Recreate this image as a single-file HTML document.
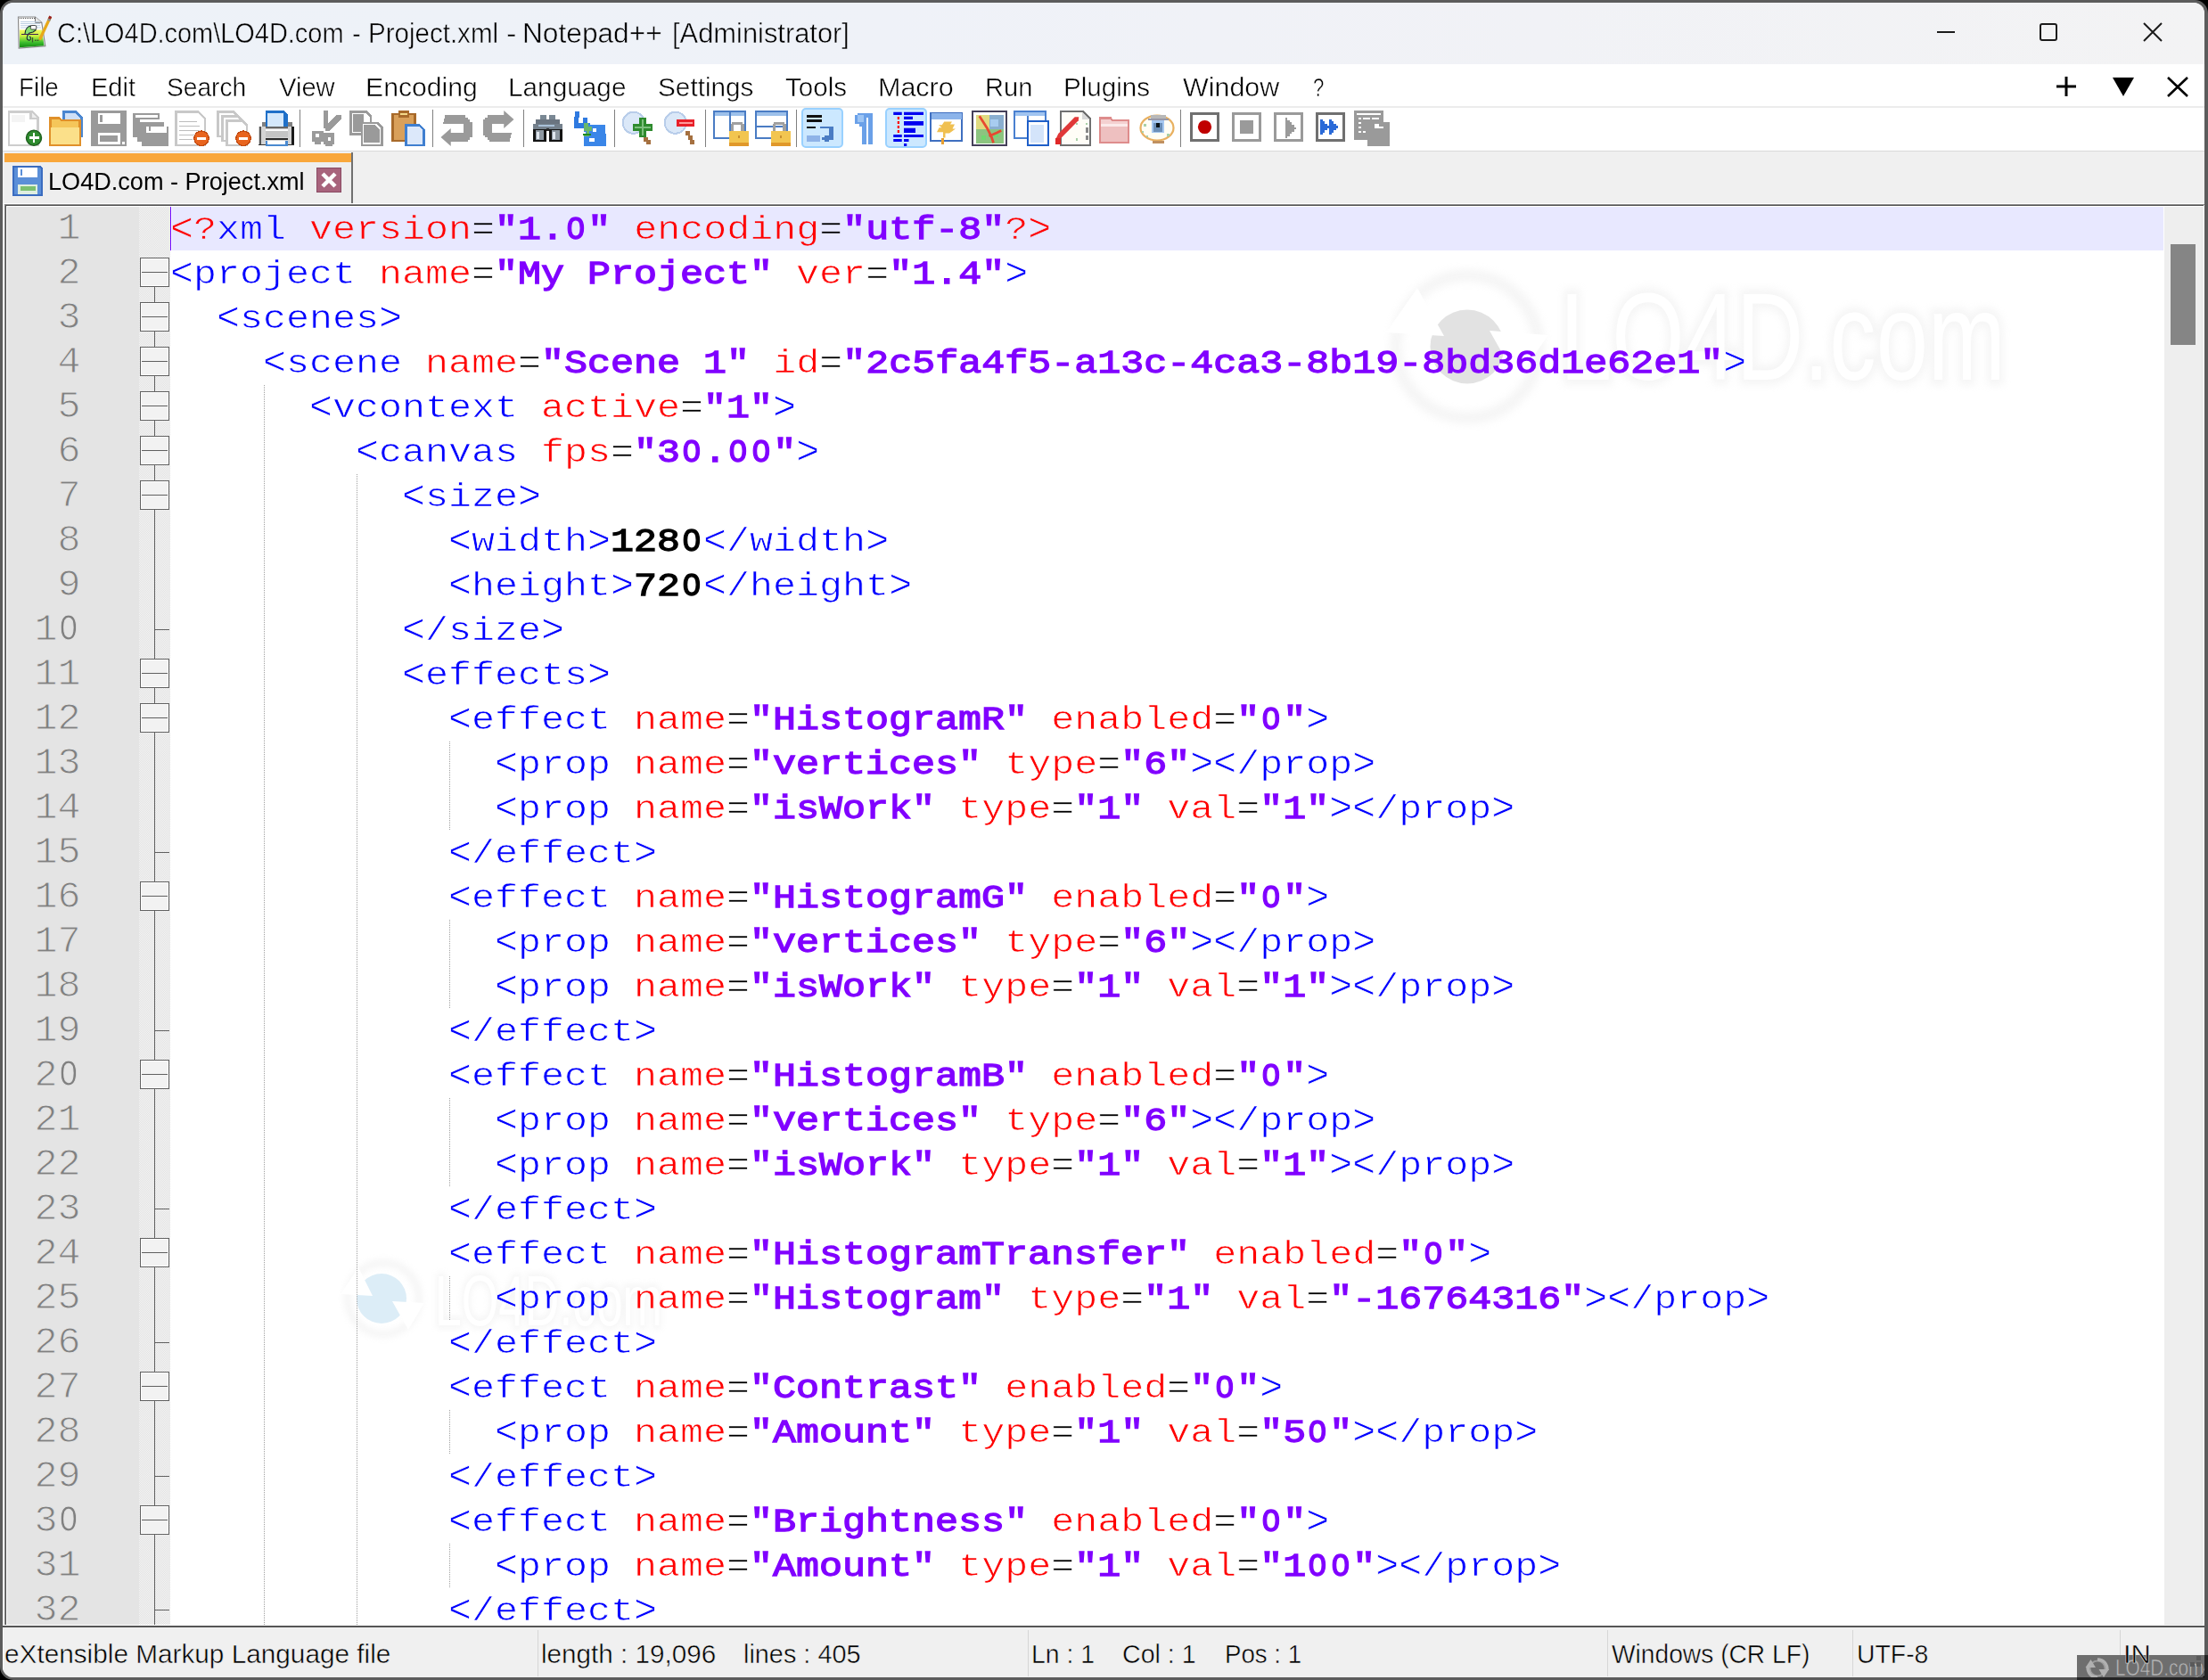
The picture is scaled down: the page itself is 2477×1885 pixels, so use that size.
<!DOCTYPE html><html><head><meta charset="utf-8"><style>
*{margin:0;padding:0;box-sizing:border-box}
html,body{width:2477px;height:1885px;overflow:hidden;background:#000}
.fr{position:absolute;left:0;top:0;width:2477px;height:1885px;background:#5c5c5c;border-radius:15px}
.win{position:absolute;left:0;top:0;width:2477px;height:1885px;clip-path:inset(3px 4px 3px 3px round 12px);background:#f0f0f0}
.t{position:absolute;white-space:pre;transform-origin:0 0}
.r{position:absolute}
.code{position:absolute;left:191px;font-family:'Liberation Mono',monospace;font-size:43.33px;line-height:50px;white-space:pre;height:50px;-webkit-text-stroke:0.8px #fff}
.code span.t_{color:#0000ff}
.ln{position:absolute;left:7.5px;width:83px;text-align:right;font-family:'Liberation Mono',monospace;font-size:43.33px;line-height:50px;color:#808080;white-space:pre;-webkit-text-stroke:1px #e4e4e4}
.a{color:#ff0000}.v{color:#8000ff;-webkit-text-stroke:1.5px #8000ff}.e{color:#000}.d{color:#ff0000}.x{color:#000;-webkit-text-stroke:1.5px #000}.tg{color:#0000ff}
.z{display:inline-block;transform:scaleX(0.8)}
.br{display:inline-block;transform:scaleY(1.2);transform-origin:50% 21.75px}
.g{position:absolute;width:1px;height:50px;background:repeating-linear-gradient(#a0a0a0 0 1px,transparent 1px 2px)}
.sep{position:absolute;top:123px;width:1px;height:42px;background:#808080}
.ssep{position:absolute;top:1829px;width:1px;height:52px;background:#d6d6d6}
</style></head><body>
<div class="fr"></div><div class="win">
<div class="r" style="left:0;top:0;width:2477px;height:72px;background:linear-gradient(90deg,#edf2f8 0%,#eff2f8 40%,#f1f2f6 70%,#f3f3f4 100%)"></div>
<div class="t" style="left:63.95px;top:14.52px;font-size:30.43px;line-height:45.65px;transform:scaleX(0.9508);color:#000;font-family:'Liberation Sans',sans-serif;-webkit-text-stroke:0.5px #eff2f8">C:\LO4D.com\LO4D.com</div>
<div class="t" style="left:394.53px;top:14.52px;font-size:30.43px;line-height:45.65px;transform:scaleX(0.9594);color:#000;font-family:'Liberation Sans',sans-serif;-webkit-text-stroke:0.5px #eff2f8">-</div>
<div class="t" style="left:412.84px;top:14.52px;font-size:30.43px;line-height:45.65px;transform:scaleX(0.9707);color:#000;font-family:'Liberation Sans',sans-serif;-webkit-text-stroke:0.5px #eff2f8">Project.xml</div>
<div class="t" style="left:567.62px;top:14.52px;font-size:30.43px;line-height:45.65px;transform:scaleX(1.1303);color:#000;font-family:'Liberation Sans',sans-serif;-webkit-text-stroke:0.5px #eff2f8">-</div>
<div class="t" style="left:586.47px;top:14.52px;font-size:30.43px;line-height:45.65px;transform:scaleX(1.0409);color:#000;font-family:'Liberation Sans',sans-serif;-webkit-text-stroke:0.5px #eff2f8">Notepad++</div>
<div class="t" style="left:753.74px;top:14.52px;font-size:30.43px;line-height:45.65px;transform:scaleX(1.0144);color:#000;font-family:'Liberation Sans',sans-serif;-webkit-text-stroke:0.5px #eff2f8">[Administrator]</div>
<svg class="r" style="left:16px;top:14px" width="46" height="44" viewBox="16 14 46 44">
<defs><linearGradient id="ng" x1="0" y1="0" x2="0" y2="1"><stop offset="0" stop-color="#f4f860"/><stop offset="0.35" stop-color="#c8f040"/><stop offset="0.7" stop-color="#40c030"/><stop offset="1" stop-color="#108a10"/></linearGradient></defs>
<path d="M20.5 19H39.5L46.8 25.3L50.8 51.7L21.2 54z" fill="#fff" stroke="#8a8a8a" stroke-width="1.2"/>
<path d="M39.5 19V25.3H46.8" fill="#e8e8e8" stroke="#777" stroke-width="1"/>
<path d="M22 20.5H39" stroke="#555" stroke-width="1" stroke-dasharray="1 1"/>
<path d="M23 24.5H44M23 26.5H45M23 28.7H45M23 31H46" stroke="#b8cce0" stroke-width="0.9"/>
<path d="M22 33.5L47 33.5L49.5 51.3L22 53.2z" fill="url(#ng)"/>
<path d="M28 38C28 32 32 29 35 29L40 30L40 34L37 36L33 37C30 40 29 44 32 45C35 46 35 41 33 41" fill="#88e070" stroke="#1a2a30" stroke-width="1.1"/>
<rect x="34.3" y="28.5" width="6.5" height="4.5" rx="1.5" fill="#fff" stroke="#222" stroke-width="0.8"/>
<path d="M24 38.5H43" stroke="#402050" stroke-width="1.1"/>
<path d="M36.5 42V47.5" stroke="#3a5a30" stroke-width="1.3"/><path d="M39 45.2H44" stroke="#222" stroke-width="1" stroke-dasharray="1 0.6"/>
<path d="M56.5 19L44.5 44.5" stroke="#e8a818" stroke-width="3.2"/><path d="M56.8 18.3L55.2 21.6" stroke="#9a2020" stroke-width="3.2"/><path d="M55.6 21.2L54.6 23.4" stroke="#909090" stroke-width="3.2"/>
</svg>
<div class="r" style="left:2173px;top:35px;width:20px;height:2px;background:#1b1b1b"></div>
<div class="r" style="left:2288px;top:26px;width:20px;height:20px;border:2px solid #1b1b1b;border-radius:3px"></div>
<svg class="r" style="left:2404px;top:25px" width="22" height="22" viewBox="0 0 22 22"><path d="M1 1L21 21M21 1L1 21" stroke="#1b1b1b" stroke-width="2"/></svg>
<div class="r" style="left:0;top:72px;width:2477px;height:47px;background:#fff"></div>
<div class="r" style="left:0;top:119px;width:2477px;height:2px;background:#ececec"></div>
<div class="t" style="left:21.28px;top:74.8px;font-size:30.0px;line-height:45.0px;transform:scaleX(0.9262);color:#000;font-family:'Liberation Sans',sans-serif;-webkit-text-stroke:0.5px #fff">File</div>
<div class="t" style="left:101.98px;top:74.8px;font-size:30.0px;line-height:45.0px;transform:scaleX(0.9675);color:#000;font-family:'Liberation Sans',sans-serif;-webkit-text-stroke:0.5px #fff">Edit</div>
<div class="t" style="left:187.29px;top:74.8px;font-size:30.0px;line-height:45.0px;transform:scaleX(0.9388);color:#000;font-family:'Liberation Sans',sans-serif;-webkit-text-stroke:0.5px #fff">Search</div>
<div class="t" style="left:312.81px;top:74.8px;font-size:30.0px;line-height:45.0px;transform:scaleX(0.972);color:#000;font-family:'Liberation Sans',sans-serif;-webkit-text-stroke:0.5px #fff">View</div>
<div class="t" style="left:410.39px;top:74.8px;font-size:30.0px;line-height:45.0px;transform:scaleX(1.0058);color:#000;font-family:'Liberation Sans',sans-serif;-webkit-text-stroke:0.5px #fff">Encoding</div>
<div class="t" style="left:570.22px;top:74.8px;font-size:30.0px;line-height:45.0px;transform:scaleX(0.9923);color:#000;font-family:'Liberation Sans',sans-serif;-webkit-text-stroke:0.5px #fff">Language</div>
<div class="t" style="left:737.71px;top:74.8px;font-size:30.0px;line-height:45.0px;transform:scaleX(0.9915);color:#000;font-family:'Liberation Sans',sans-serif;-webkit-text-stroke:0.5px #fff">Settings</div>
<div class="t" style="left:880.91px;top:74.8px;font-size:30.0px;line-height:45.0px;transform:scaleX(0.9854);color:#000;font-family:'Liberation Sans',sans-serif;-webkit-text-stroke:0.5px #fff">Tools</div>
<div class="t" style="left:985.26px;top:74.8px;font-size:30.0px;line-height:45.0px;transform:scaleX(1.0163);color:#000;font-family:'Liberation Sans',sans-serif;-webkit-text-stroke:0.5px #fff">Macro</div>
<div class="t" style="left:1105.28px;top:74.8px;font-size:30.0px;line-height:45.0px;transform:scaleX(0.9684);color:#000;font-family:'Liberation Sans',sans-serif;-webkit-text-stroke:0.5px #fff">Run</div>
<div class="t" style="left:1193.03px;top:74.8px;font-size:30.0px;line-height:45.0px;transform:scaleX(0.9873);color:#000;font-family:'Liberation Sans',sans-serif;-webkit-text-stroke:0.5px #fff">Plugins</div>
<div class="t" style="left:1327.1px;top:74.8px;font-size:30.0px;line-height:45.0px;transform:scaleX(1.015);color:#000;font-family:'Liberation Sans',sans-serif;-webkit-text-stroke:0.5px #fff">Window</div>
<div class="t" style="left:1472.62px;top:74.8px;font-size:30.0px;line-height:45.0px;transform:scaleX(0.7361);color:#000;font-family:'Liberation Sans',sans-serif;-webkit-text-stroke:0.5px #fff">?</div>
<svg class="r" style="left:2306px;top:85px" width="24" height="24" viewBox="0 0 24 24"><path d="M12 1V23M1 12H23" stroke="#000" stroke-width="3"/></svg>
<svg class="r" style="left:2370px;top:87px" width="24" height="21" viewBox="0 0 24 21"><path d="M0 0H24L12 21z" fill="#000"/></svg>
<svg class="r" style="left:2431px;top:86px" width="24" height="23" viewBox="0 0 24 23"><path d="M1 1L23 22M23 1L1 22" stroke="#000" stroke-width="2.6"/></svg>
<div class="r" style="left:0;top:121px;width:2477px;height:48px;background:#fff"></div>
<div class="r" style="left:0;top:169px;width:2477px;height:1px;background:#d9d9d9"></div>
<div class="r" style="left:899px;top:121px;width:47px;height:45px;background:#cce8ff;border:2px solid #99d1ff;border-radius:5px"></div>
<div class="r" style="left:993px;top:121px;width:47px;height:45px;background:#cce8ff;border:2px solid #99d1ff;border-radius:5px"></div>
<svg style="position:absolute;left:8px;top:124px" width="40" height="40" viewBox="0 0 16 16" shape-rendering="crispEdges" ><path d="M0.7 0.5h10.3l2.7 2.7v12.3h-13z" fill="#fff" stroke="#cdcdcd"/><path d="M10.5 0.5v3h3" fill="#eee" stroke="#cdcdcd"/><path d="M2 2h6v3h-6z" fill="#f4f4f4"/><circle cx="12" cy="12.3" r="3.4" fill="#2e8b2e" stroke="#1f5f1f" stroke-width="0.6" shape-rendering="auto"/><path d="M12 10.1v4.4M9.8 12.3h4.4" stroke="#fff" stroke-width="1.1"/></svg>
<svg style="position:absolute;left:55px;top:124px" width="40" height="40" viewBox="0 0 16 16" shape-rendering="crispEdges" ><path d="M6.5 0.5h5.5l2.5 2.5v8.5h-8z" fill="#cfe0f7" stroke="#4a86d0"/><path d="M0.5 3.3h4l1 1h8.3v11.2h-13.3z" fill="#f5c65a" stroke="#e0902a"/><path d="M0.9 7.5h12.5v7.6h-12.5z" fill="#fbe08a"/></svg>
<svg style="position:absolute;left:102px;top:124px" width="40" height="40" viewBox="0 0 16 16" shape-rendering="crispEdges" ><path d="M0 0h16v16h-16z" fill="#9a9a9a"/><path d="M3 1h10v5h-10z" fill="#fff"/><path d="M4 2h1v3h-1z" fill="#9a9a9a"/><path d="M3 10h10v5h-10z" fill="#fff"/><path d="M4 11h8v3h-8z" fill="#9a9a9a"/><path d="M14 14h1v1h-1z" fill="#fff"/></svg>
<svg style="position:absolute;left:149px;top:124px" width="40" height="40" viewBox="0 0 16 16" shape-rendering="crispEdges" ><path d="M0 1h12v4h2v2h2v9h-12v-2h-2v-2h-2z" fill="#9a9a9a"/><path d="M1 2h10v1h-10z M3 4h9v1h-9z" fill="#fff"/><path d="M6 7h9v3h-9z" fill="#fff"/><path d="M7 7h1v2h-1z" fill="#9a9a9a"/></svg>
<svg style="position:absolute;left:196px;top:124px" width="40" height="40" viewBox="0 0 16 16" shape-rendering="crispEdges" ><path d="M0.5 0.5h10l3 3v12h-13z" fill="#fff" stroke="#c8c8c8"/><path d="M2 5h8M2 7h9M2 9h9M2 11h7M2 13h6" stroke="#bdbdbd" stroke-width="0.7"/><circle cx="12" cy="12.5" r="3.3" fill="#e8641e" stroke="#c24a10" stroke-width="0.5"/><path d="M10 12.5h4" stroke="#fff" stroke-width="1"/></svg>
<svg style="position:absolute;left:243px;top:124px" width="40" height="40" viewBox="0 0 16 16" shape-rendering="crispEdges" ><path d="M0.5 0.5h7l2 2v9h-9z" fill="#fff" stroke="#c8c8c8"/><path d="M2.5 2.5h7l2 2v9h-9z" fill="#fff" stroke="#c8c8c8"/><path d="M4.5 4.5h7l2 2v9h-9z" fill="#fff" stroke="#c8c8c8"/><circle cx="12" cy="12.5" r="3.3" fill="#e8641e" stroke="#c24a10" stroke-width="0.5"/><path d="M10 12.5h4" stroke="#fff" stroke-width="1"/></svg>
<svg style="position:absolute;left:290px;top:124px" width="40" height="40" viewBox="0 0 16 16" shape-rendering="crispEdges" ><path d="M0 7h16v8h-16z" fill="#d4d4d4"/><path d="M0.2 7h1v8h-1z" fill="#555"/><path d="M14.8 7h1v8h-1z" fill="#1a1a1a"/>
<path d="M1.5 5h2v2h-2z M12.5 5h2.5v2h-2.5z" fill="#808080"/><path d="M3 8h10v4h-10z" fill="#c4c4c4"/><path d="M3 8.2h10v1h-10z" fill="#fafafa"/>
<path d="M3 7h10v1h-10z" fill="#666"/><path d="M3 12.2h10v0.9h-10z" fill="#2a2a2a"/><path d="M0 15h16v0.6h-16z" fill="#333"/>
<path d="M3 0h8.5l1.8 1.8v5.2h-10.3z" fill="#2070c8"/><path d="M4 1h7v6h-7z" fill="#d4e8fb"/>
<path d="M3 13.5h10v2.5h-10z" fill="#4a8ad0"/><path d="M4 13.7h8v1.4h-8z" fill="#fff"/></svg>
<svg style="position:absolute;left:345px;top:124px" width="40" height="40" viewBox="0 0 16 16" shape-rendering="crispEdges" ><path d="M7 0h2v8h-2z" fill="#9a9a9a"/><path d="M13 2h2v2l-5 5h-2v-2z" fill="#9a9a9a"/><path d="M2 9h5v5h-1v1h-3v-1h-1z M7 10h5v5h-1v1h-3v-1h-1z" fill="#9a9a9a"/><path d="M3.5 10.5h1.5v1.5h-1.5z M9 12h1.5v1.5h-1.5z" fill="#fff"/></svg>
<svg style="position:absolute;left:392px;top:124px" width="40" height="40" viewBox="0 0 16 16" shape-rendering="crispEdges" ><path d="M0.5 0.5h7l2 2v8h-9z" fill="#fff" stroke="#9a9a9a"/><path d="M1.5 1.5h5v8h-5z" fill="#9a9a9a"/><path d="M5.5 5.5h7l2 2v8h-9z" fill="#fff" stroke="#9a9a9a"/><path d="M6.5 6.5h5l2 2v6h-7z" fill="#9a9a9a"/></svg>
<svg style="position:absolute;left:439px;top:124px" width="40" height="40" viewBox="0 0 16 16" shape-rendering="crispEdges" ><path d="M0.5 1.5h10v12h-10z" fill="#d9a05a" stroke="#a86a2a"/><path d="M3.5 0.5h4v2h-4z" fill="#f3d98a" stroke="#a86a2a"/><path d="M6.5 6.5h6l2 2v7h-8z" fill="#dce8fa" stroke="#3f7fd0"/></svg>
<svg style="position:absolute;left:492px;top:124px" width="40" height="40" viewBox="0 0 16 16" shape-rendering="crispEdges" ><path d="M3 2h9v1h1v1h1v1h1v7h-1v1h-1v1h-8v-4h6v-4h-9z" fill="#9a9a9a"/><path d="M5.5 8v8l-4.5-4z" fill="#9a9a9a" shape-rendering="auto"/></svg>
<svg style="position:absolute;left:539px;top:124px" width="40" height="40" viewBox="0 0 16 16" shape-rendering="crispEdges" ><g transform="rotate(180 8 8)"><path d="M3 2h9v1h1v1h1v1h1v7h-1v1h-1v1h-8v-4h6v-4h-9z" fill="#9a9a9a"/><path d="M5.5 8v8l-4.5-4z" fill="#9a9a9a" shape-rendering="auto"/></g></svg>
<svg style="position:absolute;left:594px;top:124px" width="40" height="40" viewBox="0 0 16 16" shape-rendering="crispEdges" ><path d="M4.8 1.9h2.8v2.5h-2.8z M8.8 1.9h2.7v2.5h-2.7z" fill="#7a8894"/><path d="M2.8 4h10.7v2h-10.7z" fill="#6a7480"/>
<path d="M1.6 6h13.2v2.2h-13.2z" fill="#74808c"/><path d="M4 6.3h7v0.8h-7z" fill="#a8c0d8"/>
<path d="M1.6 8.2h6v5.8h-6z M8.8 8.2h6v5.8h-6z" fill="#141414"/><path d="M2.7 8.9h3.8v4.1h-3.8z M9.9 8.9h3.8v4.1h-3.8z" fill="#8e98a2"/>
<path d="M3.2 9.4h1.1v3.3h-1.1z M10.4 9.4h1.1v3.3h-1.1z" fill="#e0e6ee"/><path d="M7.6 8h1.2v1h-1.2z" fill="#2a2a2a"/></svg>
<svg style="position:absolute;left:641px;top:124px" width="40" height="40" viewBox="0 0 16 16" shape-rendering="crispEdges" ><path d="M1.6 0.5h2v2.5h3.4v2.5h1.2v2.5h-7.2v-5.1h0.6z" fill="#2f7ae0"/><path d="M3 3.3h2.2v2.4h-2.2z" fill="#fff"/>
<path d="M5.6 6.5h9.5v4h0.4v5.5h-10v-5h1v-1.5h-0.9z" fill="#3a86e8"/><path d="M9.5 7.8h1.5v1.7h-1.5z M8 12.3h2.5v1.5h-2.5z" fill="#fff"/>
<path d="M5.5 5.5h2v1.8h1.5v2h-1.2v2.2h-2.4v-1h1.2v-1.5h-1.1z" fill="#6ab86a"/><path d="M5.3 10.3h3.5v0.8h-3.5z" fill="#1f8a1f"/></svg>
<svg style="position:absolute;left:697px;top:124px" width="40" height="40" viewBox="0 0 16 16" shape-rendering="crispEdges" ><circle cx="5.5" cy="5.5" r="4.8" fill="#dbe8f8" stroke="#b8cdea" stroke-width="0.8"/><path d="M8 3h3v3h3v3h-3v3h-3v-3h-3v-3h3z" fill="#2e8b2e"/><path d="M9 4h1v7h-1z M6 7h7v1h-7z" fill="#7fc07f"/><path d="M10 12h2v1h1v2h-2v-1h-1z" fill="#a57040"/></svg>
<svg style="position:absolute;left:744px;top:124px" width="40" height="40" viewBox="0 0 16 16" shape-rendering="crispEdges" ><circle cx="5.5" cy="5.5" r="4.8" fill="#dbe8f8" stroke="#b8cdea" stroke-width="0.8"/><path d="M6 4h8v3h-8z" fill="#e8202a"/><path d="M7 5h6v1h-6z" fill="#ff9a9a"/><path d="M10 9h2v2h1v2h1v2h-2v-2h-1v-2h-1z" fill="#a57040"/></svg>
<svg style="position:absolute;left:800px;top:124px" width="40" height="40" viewBox="0 0 16 16" shape-rendering="crispEdges" ><path d="M0 0h14.7v12.7h-14.7z" fill="#4a7cc4"/><path d="M0.7 0.7h13.3v1.6h-13.3z" fill="#9cc0ea"/><path d="M0.7 2.3h13.3v9.7h-13.3z" fill="#fff"/><path d="M7 0.7h0.8v11.3h-0.8z" fill="#4a7cc4"/>
<path d="M8.5 5h4.5v1h0.8v3h-1.5v-2.5h-3v2.5h-1.5v-3h0.7z" fill="#a0a0a0"/><path d="M7 9h9v7h-9z" fill="#f2c550"/><path d="M7 14.5h9v1.5h-9z" fill="#e0982a"/><path d="M11 11h1v1.5h-1z" fill="#c89030"/></svg>
<svg style="position:absolute;left:847px;top:124px" width="40" height="40" viewBox="0 0 16 16" shape-rendering="crispEdges" ><path d="M0 0h14.7v12.7h-14.7z" fill="#4a7cc4"/><path d="M0.7 0.7h13.3v1.6h-13.3z" fill="#9cc0ea"/><path d="M0.7 2.3h13.3v9.7h-13.3z" fill="#fff"/><path d="M0.7 6.6h13.3v0.8h-13.3z" fill="#4a7cc4"/>
<path d="M8.5 5h4.5v1h0.8v3h-1.5v-2.5h-3v2.5h-1.5v-3h0.7z" fill="#a0a0a0"/><path d="M7 9h9v7h-9z" fill="#f2c550"/><path d="M7 14.5h9v1.5h-9z" fill="#e0982a"/><path d="M11 11h1v1.5h-1z" fill="#c89030"/></svg>
<svg style="position:absolute;left:902px;top:124px" width="40" height="40" viewBox="0 0 16 16" shape-rendering="crispEdges" ><path d="M1 2h7v1h-7z M1 4h7v1h-7z M1 7h4v1h-4z" fill="#111"/><path d="M7 7h6v6h-2v-5h-4z" fill="#4a7cc4"/><path d="M1 11h6v3h-6z" fill="#8fb3e8"/><path d="M9 11h2v3h-2z M8 12h1v1h-1z" fill="#4a7cc4"/></svg>
<svg style="position:absolute;left:949px;top:124px" width="40" height="40" viewBox="0 0 16 16" shape-rendering="crispEdges" ><path d="M4 1h8v14h-2v-12h-1v12h-2v-8h-1v-1h-2v-4h1v-1z" fill="#6aa0e8"/><path d="M5 2h3v3h-3z" fill="#9cc4f4"/></svg>
<svg style="position:absolute;left:996px;top:124px" width="40" height="40" viewBox="0 0 16 16" shape-rendering="crispEdges" ><path d="M2.5 0.7h3.8v1.3h-3.8z M7.2 0.7h8.8v1.3h-8.8z M7.2 2.7h4v1.3h-4z M7.2 4.8h8.8v1.9h-8.8z M7.2 7.9h5.2v2.1h-5.2z M2.5 10.8h3.8v1.2h-3.8z M7.2 10.8h8.8v1.2h-8.8z M2.5 12.8h3.8v1.2h-3.8z M7.2 12.8h2.2v1.2h-2.2z M7.2 14.8h1.3v1.2h-1.3z" fill="#0000f0" shape-rendering="auto"/><path d="M4.3 2.8h0.9v1.2h-0.9z M4.3 4.8h0.9v1.2h-0.9z M4.3 6.8h0.9v1.2h-0.9z M4.3 8.8h0.9v1.2h-0.9z" fill="#f00" shape-rendering="auto"/></svg>
<svg style="position:absolute;left:1043px;top:124px" width="40" height="40" viewBox="0 0 16 16" shape-rendering="crispEdges" ><path d="M0 0.8h14.8v13.1h-14.8z" fill="#3f6fc0"/><path d="M0.6 1.3h13.6v2.5h-13.6z" fill="#8cb4ea"/><path d="M0.8 3.8h13.2v9.3h-13.2z" fill="#fff"/>
<path d="M6.5 5h3.5l-0.8 1.2h2l-1 2h1.4l-2.8 2h-1.8v2h-1v-2.5h-2.8l1-2h1.2l-1.4-1.2h1.5z" fill="#f0c050" shape-rendering="auto"/><path d="M5 12.5h1.5v2.5h-1.5z" fill="#e8a030"/></svg>
<svg style="position:absolute;left:1090px;top:124px" width="40" height="40" viewBox="0 0 16 16" shape-rendering="crispEdges" ><path d="M0 0h16v16h-16z" fill="#45405a"/><path d="M0.8 0.8h14.4v14.4h-14.4z" fill="#fff"/>
<path d="M2 2h12.3v12.7h-12.3z" fill="#e0da80"/><path d="M8 2h6.3v6.5h-6.3z" fill="#8aaed0"/><path d="M8.5 4h3.5v3h-3.5z" fill="#a8ccf0"/>
<path d="M2 8.5h12.3v6.2h-12.3z" fill="#8cc480"/><path d="M4.5 11h2v2h-2z M10 10h2v2h-2z" fill="#70d870"/>
<path d="M3.5 2.5l3.5 5.5l1.8 3.5l1 3 M7.8 11.5l3.5 -1.5l2 -1" stroke="#e84830" stroke-width="1.1" fill="none" shape-rendering="auto"/></svg>
<svg style="position:absolute;left:1137px;top:124px" width="40" height="40" viewBox="0 0 16 16" shape-rendering="crispEdges" ><path d="M0 0h14.7v12.7h-14.7z" fill="#4a80d0"/><path d="M0.6 0.6h13.5v1.8h-13.5z" fill="#a0c4f0"/><path d="M0.6 2.4h13.5v9.7h-13.5z" fill="#fff"/>
<path d="M6 2.4h0.8v9.7h-0.8z" fill="#4a80d0"/><path d="M6.1 4.2h9.8v11.7h-9.8z" fill="#1f5fc8"/><path d="M6.9 5h8.2v10.1h-8.2z" fill="#fff"/><path d="M7.5 6.5h6v8h-6z" fill="#d4e4fa"/></svg>
<svg style="position:absolute;left:1184px;top:124px" width="40" height="40" viewBox="0 0 16 16" shape-rendering="crispEdges" ><path d="M2.1 0h10.3l3.5 3.5v12.4h-13.8z" fill="#707070"/><path d="M2.8 0.7h9.3l3.1 3.1v11.4h-12.4z" fill="#fffdf7"/><path d="M12 0.7v3.1h3.1" fill="#d8d8d8"/>
<path d="M9 5.5h1v1h-1z M13.5 5.5h1v1h-1z M9 12.5h1v1h-1z" fill="#a8d0a8"/><path d="M13.6 7.5h1v2.5h-1z M13.6 11h1v2h-1z" fill="#888"/>
<path d="M0 13.2l1.3 -2.8l7.4 -7.5h1.8l-0.2 1.6l-7.2 7.3l-2.4 2.1z" fill="#e03838" shape-rendering="auto"/><path d="M0 12.5h2.5v2.5h-2.5z" fill="#e02828"/></svg>
<svg style="position:absolute;left:1231px;top:124px" width="40" height="40" viewBox="0 0 16 16" shape-rendering="crispEdges" ><path d="M0.6 2.8h5.5l0.8 1h7.5v11h-13.8z" fill="#d87878" opacity="0.85"/><path d="M1.6 3.8h4.2l0.8 1h7v1.5h-12z" fill="#f4d0d0"/><path d="M1.6 6.3h12v7.5h-12z" fill="#eec0c0"/><path d="M1.6 6h12v1.2h-12z" fill="#fbeaea"/></svg>
<svg style="position:absolute;left:1278px;top:124px" width="40" height="40" viewBox="0 0 16 16" shape-rendering="crispEdges" ><ellipse cx="8" cy="7.8" rx="7.4" ry="5.6" fill="#fffdf4" stroke="#e8b060" stroke-width="0.9" shape-rendering="auto"/>
<path d="M2 6h1v1h-1z M1 9h1v1h-1z M3 11h1v1h-1z M12.5 10.5h1v1h-1z" fill="#a8d0a8"/><path d="M5 2h7v2h-7z" fill="#b8b8b8"/><path d="M4 3.5h9v0.8h-9z" fill="#9898a8"/>
<path d="M5.5 4.5h5.5v5.5h-5.5z" fill="#a6c8f0"/><path d="M6.5 5.5h4v4h-4z" fill="#6c90b8"/><path d="M7.5 5.5h1.5v2h-1.5z" fill="#0a1418"/><path d="M6 13.5h5v1.3h-5z" fill="#c09060"/></svg>
<svg style="position:absolute;left:1335px;top:126px" width="33" height="33" viewBox="0 0 13 13" shape-rendering="crispEdges" ><path d="M0.5 0.5h12v12h-12z" fill="#fff" stroke="#707070"/><circle cx="6.5" cy="6.5" r="3" fill="#c00000" shape-rendering="auto"/></svg>
<svg style="position:absolute;left:1382px;top:126px" width="33" height="33" viewBox="0 0 13 13" shape-rendering="crispEdges" ><path d="M0.5 0.5h12v12h-12z" fill="#fff" stroke="#9a9a9a"/><path d="M3.5 3.5h6v6h-6z" fill="#9a9a9a"/></svg>
<svg style="position:absolute;left:1429px;top:126px" width="33" height="33" viewBox="0 0 13 13" shape-rendering="crispEdges" ><path d="M0.5 0.5h12v12h-12z" fill="#fff" stroke="#9a9a9a"/><path d="M5 2.5h1v1h1v1h1v1h1v1h1v1h-1v1h-1v1h-1v1h-1v1h-1z" fill="#9a9a9a"/></svg>
<svg style="position:absolute;left:1476px;top:126px" width="33" height="33" viewBox="0 0 13 13" shape-rendering="crispEdges" ><path d="M0.5 0.5h12v12h-12z" fill="#fff" stroke="#707070"/><path d="M2 3h1v1h1v1h1v1h1v1h-1v1h-1v1h-1v1h-1z M6 3h1v1h1v1h1v1h1v1h-1v1h-1v1h-1v1h-1z" fill="#2a6ad8"/></svg>
<svg style="position:absolute;left:1519px;top:124px" width="40" height="40" viewBox="0 0 16 16" shape-rendering="crispEdges" ><path d="M0 0h13v5h3v11h-10v-3h-6z" fill="#9a9a9a"/><path d="M1 1h11v1h-11z M2 3h1v1h-1z M4 3h3v1h-3z M8 3h3v1h-3z M2 5h1v1h-1z M2 7h1v1h-1z M2 9h1v1h-1z M4 9h1v1h-1z M8 6h1v2h4v-1h-2v-1h-2z" fill="#fff"/></svg>
<div class="sep" style="left:336px"></div>
<div class="sep" style="left:485px"></div>
<div class="sep" style="left:587px"></div>
<div class="sep" style="left:689px"></div>
<div class="sep" style="left:791px"></div>
<div class="sep" style="left:893px"></div>
<div class="sep" style="left:1324px"></div>
<div class="r" style="left:0;top:170px;width:2477px;height:58px;background:#f0f0f0"></div>
<div class="r" style="left:0;top:228px;width:2477px;height:1px;background:#fff"></div>
<div class="r" style="left:5px;top:172px;width:389px;height:10px;background:#f9a73b"></div>
<div class="r" style="left:5px;top:182px;width:389px;height:46px;background:#eeeeee"></div>
<div class="r" style="left:394px;top:171px;width:2px;height:57px;background:#707070"></div>
<svg class="r" style="left:14px;top:186px" width="34" height="34" viewBox="0 0 16 16" shape-rendering="crispEdges">
<path d="M0.5 0.5h14l1 1v14h-15z" fill="#5b8fd8" stroke="#3a6cc0"/><path d="M3 1h10v5h-10z" fill="#fff"/><path d="M4 2h1v3h-1z" fill="#5b8fd8"/>
<path d="M3 10h10v5h-10z" fill="#dfeee0"/><path d="M4 11h8v2h-8z" fill="#7cc070"/></svg>
<svg class="r" style="left:355px;top:188px" width="28" height="28" viewBox="0 0 28 28">
<rect x="0" y="0" width="28" height="28" fill="#a8637c"/><rect x="0.5" y="0.5" width="27" height="27" fill="none" stroke="#8a4a62"/>
<path d="M7 7L21 21M21 7L7 21" stroke="#fff" stroke-width="4.5"/></svg>
<div class="t" style="left:53.53px;top:183.27px;font-size:28.12px;line-height:42.17px;transform:scaleX(0.9641);color:#000;font-family:'Liberation Sans',sans-serif">LO4D.com - Project.xml</div>
<div class="r" style="left:5px;top:229px;width:2468px;height:1px;background:#8c8c8c"></div>
<div class="r" style="left:5px;top:229px;width:1px;height:1595px;background:#8c8c8c"></div>
<div class="r" style="left:6px;top:230px;width:2466px;height:1px;background:#505050"></div>
<div class="r" style="left:6px;top:230px;width:1px;height:1593px;background:#505050"></div>
<div class="r" style="left:7px;top:231px;width:2466px;height:1593px;background:#fff"></div>
<div class="r" style="left:8px;top:232px;width:148px;height:1591px;background:#e4e4e4"></div>
<div class="r" style="left:156px;top:232px;width:35px;height:1591px;background-color:#f4f4f4;background-image:repeating-conic-gradient(#e2e2e2 0 25%,#f4f4f4 0 50%);background-size:2px 2px"></div>
<div class="r" style="left:191px;top:232px;width:2237px;height:1591px;background:#fff"></div>
<div class="r" style="left:193px;top:232px;width:2234px;height:49px;background:#e8e8ff"></div>
<div class="r" style="left:191px;top:232px;width:1px;height:49px;background:#6a00ff"></div>
<div class="r" style="left:2428px;top:232px;width:43px;height:1591px;background:#eeeeee;border-right:1px solid #e3e3e3;border-bottom:1px solid #e3e3e3"></div>
<div class="r" style="left:2435px;top:274px;width:28px;height:113px;background:#858585"></div>
<svg class="r" style="left:1540px;top:290px;overflow:visible" width="760" height="210" viewBox="0 0 760 210">
<defs><filter id="gl" x="-20%" y="-30%" width="140%" height="160%"><feGaussianBlur stdDeviation="4"/></filter></defs>
<g filter="url(#gl)" opacity="0.2"><circle cx="106" cy="99" r="80" fill="none" stroke="#d0d0d0" stroke-width="14"/><text x="210" y="136" font-family="Liberation Sans" font-size="140" fill="none" stroke="#d0d0d0" stroke-width="12" textLength="500" lengthAdjust="spacingAndGlyphs">LO4D.com</text></g>
<circle cx="106" cy="99" r="41.5" fill="#e2e2e2"/>
<path d="M50 33L15 83L80 87z M162 136L131 81L197 86z" fill="#fff"/>
<text x="210" y="136" font-family="Liberation Sans" font-size="140" fill="#fff" textLength="500" lengthAdjust="spacingAndGlyphs">LO4D.com</text>
</svg>
<svg class="r" style="left:370px;top:1400px;overflow:visible" width="380" height="115" viewBox="0 -10 380 115">
<defs><filter id="gl2" x="-20%" y="-30%" width="140%" height="160%"><feGaussianBlur stdDeviation="3"/></filter></defs>
<g filter="url(#gl2)" opacity="0.18"><circle cx="60" cy="47" r="40" fill="none" stroke="#d0d0d0" stroke-width="9"/><text x="118" y="77" font-family="Liberation Sans" font-size="80" fill="none" stroke="#d0d0d0" stroke-width="8" textLength="255" lengthAdjust="spacingAndGlyphs">LO4D.com</text></g>
<circle cx="58" cy="47" r="28" fill="#dcedf7"/>
<path d="M32 12L12 42L48 44z M88 82L70 50L106 52z" fill="#fff"/>
<text x="118" y="77" font-family="Liberation Sans" font-size="80" fill="#fff" textLength="255" lengthAdjust="spacingAndGlyphs">LO4D.com</text>
</svg>
<div class="r" style="left:157px;top:289px;width:33px;height:33px;border:1px solid #606060;background:#f2f2f2;box-shadow:inset 0 0 0 1px #fff"></div>
<div class="r" style="left:159px;top:305px;width:29px;height:1px;background:#606060"></div>
<div class="r" style="left:173px;top:322px;width:1px;height:10px;background:#606060"></div>
<div class="r" style="left:157px;top:339px;width:33px;height:33px;border:1px solid #606060;background:#f2f2f2;box-shadow:inset 0 0 0 1px #fff"></div>
<div class="r" style="left:159px;top:355px;width:29px;height:1px;background:#606060"></div>
<div class="r" style="left:173px;top:372px;width:1px;height:10px;background:#606060"></div>
<div class="r" style="left:173px;top:332px;width:1px;height:7px;background:#606060"></div>
<div class="r" style="left:157px;top:389px;width:33px;height:33px;border:1px solid #606060;background:#f2f2f2;box-shadow:inset 0 0 0 1px #fff"></div>
<div class="r" style="left:159px;top:405px;width:29px;height:1px;background:#606060"></div>
<div class="r" style="left:173px;top:422px;width:1px;height:10px;background:#606060"></div>
<div class="r" style="left:173px;top:382px;width:1px;height:7px;background:#606060"></div>
<div class="r" style="left:157px;top:439px;width:33px;height:33px;border:1px solid #606060;background:#f2f2f2;box-shadow:inset 0 0 0 1px #fff"></div>
<div class="r" style="left:159px;top:455px;width:29px;height:1px;background:#606060"></div>
<div class="r" style="left:173px;top:472px;width:1px;height:10px;background:#606060"></div>
<div class="r" style="left:173px;top:432px;width:1px;height:7px;background:#606060"></div>
<div class="r" style="left:157px;top:489px;width:33px;height:33px;border:1px solid #606060;background:#f2f2f2;box-shadow:inset 0 0 0 1px #fff"></div>
<div class="r" style="left:159px;top:505px;width:29px;height:1px;background:#606060"></div>
<div class="r" style="left:173px;top:522px;width:1px;height:10px;background:#606060"></div>
<div class="r" style="left:173px;top:482px;width:1px;height:7px;background:#606060"></div>
<div class="r" style="left:157px;top:539px;width:33px;height:33px;border:1px solid #606060;background:#f2f2f2;box-shadow:inset 0 0 0 1px #fff"></div>
<div class="r" style="left:159px;top:555px;width:29px;height:1px;background:#606060"></div>
<div class="r" style="left:173px;top:572px;width:1px;height:10px;background:#606060"></div>
<div class="r" style="left:173px;top:532px;width:1px;height:7px;background:#606060"></div>
<div class="r" style="left:173px;top:582px;width:1px;height:50px;background:#606060"></div>
<div class="r" style="left:173px;top:632px;width:1px;height:50px;background:#606060"></div>
<div class="r" style="left:173px;top:682px;width:1px;height:50px;background:#606060"></div>
<div class="r" style="left:173px;top:706px;width:17px;height:1px;background:#606060"></div>
<div class="r" style="left:157px;top:739px;width:33px;height:33px;border:1px solid #606060;background:#f2f2f2;box-shadow:inset 0 0 0 1px #fff"></div>
<div class="r" style="left:159px;top:755px;width:29px;height:1px;background:#606060"></div>
<div class="r" style="left:173px;top:772px;width:1px;height:10px;background:#606060"></div>
<div class="r" style="left:173px;top:732px;width:1px;height:7px;background:#606060"></div>
<div class="r" style="left:157px;top:789px;width:33px;height:33px;border:1px solid #606060;background:#f2f2f2;box-shadow:inset 0 0 0 1px #fff"></div>
<div class="r" style="left:159px;top:805px;width:29px;height:1px;background:#606060"></div>
<div class="r" style="left:173px;top:822px;width:1px;height:10px;background:#606060"></div>
<div class="r" style="left:173px;top:782px;width:1px;height:7px;background:#606060"></div>
<div class="r" style="left:173px;top:832px;width:1px;height:50px;background:#606060"></div>
<div class="r" style="left:173px;top:882px;width:1px;height:50px;background:#606060"></div>
<div class="r" style="left:173px;top:932px;width:1px;height:50px;background:#606060"></div>
<div class="r" style="left:173px;top:956px;width:17px;height:1px;background:#606060"></div>
<div class="r" style="left:157px;top:989px;width:33px;height:33px;border:1px solid #606060;background:#f2f2f2;box-shadow:inset 0 0 0 1px #fff"></div>
<div class="r" style="left:159px;top:1005px;width:29px;height:1px;background:#606060"></div>
<div class="r" style="left:173px;top:1022px;width:1px;height:10px;background:#606060"></div>
<div class="r" style="left:173px;top:982px;width:1px;height:7px;background:#606060"></div>
<div class="r" style="left:173px;top:1032px;width:1px;height:50px;background:#606060"></div>
<div class="r" style="left:173px;top:1082px;width:1px;height:50px;background:#606060"></div>
<div class="r" style="left:173px;top:1132px;width:1px;height:50px;background:#606060"></div>
<div class="r" style="left:173px;top:1156px;width:17px;height:1px;background:#606060"></div>
<div class="r" style="left:157px;top:1189px;width:33px;height:33px;border:1px solid #606060;background:#f2f2f2;box-shadow:inset 0 0 0 1px #fff"></div>
<div class="r" style="left:159px;top:1205px;width:29px;height:1px;background:#606060"></div>
<div class="r" style="left:173px;top:1222px;width:1px;height:10px;background:#606060"></div>
<div class="r" style="left:173px;top:1182px;width:1px;height:7px;background:#606060"></div>
<div class="r" style="left:173px;top:1232px;width:1px;height:50px;background:#606060"></div>
<div class="r" style="left:173px;top:1282px;width:1px;height:50px;background:#606060"></div>
<div class="r" style="left:173px;top:1332px;width:1px;height:50px;background:#606060"></div>
<div class="r" style="left:173px;top:1356px;width:17px;height:1px;background:#606060"></div>
<div class="r" style="left:157px;top:1389px;width:33px;height:33px;border:1px solid #606060;background:#f2f2f2;box-shadow:inset 0 0 0 1px #fff"></div>
<div class="r" style="left:159px;top:1405px;width:29px;height:1px;background:#606060"></div>
<div class="r" style="left:173px;top:1422px;width:1px;height:10px;background:#606060"></div>
<div class="r" style="left:173px;top:1382px;width:1px;height:7px;background:#606060"></div>
<div class="r" style="left:173px;top:1432px;width:1px;height:50px;background:#606060"></div>
<div class="r" style="left:173px;top:1482px;width:1px;height:50px;background:#606060"></div>
<div class="r" style="left:173px;top:1506px;width:17px;height:1px;background:#606060"></div>
<div class="r" style="left:157px;top:1539px;width:33px;height:33px;border:1px solid #606060;background:#f2f2f2;box-shadow:inset 0 0 0 1px #fff"></div>
<div class="r" style="left:159px;top:1555px;width:29px;height:1px;background:#606060"></div>
<div class="r" style="left:173px;top:1572px;width:1px;height:10px;background:#606060"></div>
<div class="r" style="left:173px;top:1532px;width:1px;height:7px;background:#606060"></div>
<div class="r" style="left:173px;top:1582px;width:1px;height:50px;background:#606060"></div>
<div class="r" style="left:173px;top:1632px;width:1px;height:50px;background:#606060"></div>
<div class="r" style="left:173px;top:1656px;width:17px;height:1px;background:#606060"></div>
<div class="r" style="left:157px;top:1689px;width:33px;height:33px;border:1px solid #606060;background:#f2f2f2;box-shadow:inset 0 0 0 1px #fff"></div>
<div class="r" style="left:159px;top:1705px;width:29px;height:1px;background:#606060"></div>
<div class="r" style="left:173px;top:1722px;width:1px;height:10px;background:#606060"></div>
<div class="r" style="left:173px;top:1682px;width:1px;height:7px;background:#606060"></div>
<div class="r" style="left:173px;top:1732px;width:1px;height:50px;background:#606060"></div>
<div class="r" style="left:173px;top:1782px;width:1px;height:50px;background:#606060"></div>
<div class="r" style="left:173px;top:1806px;width:17px;height:1px;background:#606060"></div>
<div class="g" style="left:296px;top:432px"></div>
<div class="g" style="left:296px;top:482px"></div>
<div class="g" style="left:296px;top:532px"></div>
<div class="g" style="left:400px;top:532px"></div>
<div class="g" style="left:296px;top:582px"></div>
<div class="g" style="left:400px;top:582px"></div>
<div class="g" style="left:296px;top:632px"></div>
<div class="g" style="left:400px;top:632px"></div>
<div class="g" style="left:296px;top:682px"></div>
<div class="g" style="left:400px;top:682px"></div>
<div class="g" style="left:296px;top:732px"></div>
<div class="g" style="left:400px;top:732px"></div>
<div class="g" style="left:296px;top:782px"></div>
<div class="g" style="left:400px;top:782px"></div>
<div class="g" style="left:296px;top:832px"></div>
<div class="g" style="left:400px;top:832px"></div>
<div class="g" style="left:504px;top:832px"></div>
<div class="g" style="left:296px;top:882px"></div>
<div class="g" style="left:400px;top:882px"></div>
<div class="g" style="left:504px;top:882px"></div>
<div class="g" style="left:296px;top:932px"></div>
<div class="g" style="left:400px;top:932px"></div>
<div class="g" style="left:296px;top:982px"></div>
<div class="g" style="left:400px;top:982px"></div>
<div class="g" style="left:296px;top:1032px"></div>
<div class="g" style="left:400px;top:1032px"></div>
<div class="g" style="left:504px;top:1032px"></div>
<div class="g" style="left:296px;top:1082px"></div>
<div class="g" style="left:400px;top:1082px"></div>
<div class="g" style="left:504px;top:1082px"></div>
<div class="g" style="left:296px;top:1132px"></div>
<div class="g" style="left:400px;top:1132px"></div>
<div class="g" style="left:296px;top:1182px"></div>
<div class="g" style="left:400px;top:1182px"></div>
<div class="g" style="left:296px;top:1232px"></div>
<div class="g" style="left:400px;top:1232px"></div>
<div class="g" style="left:504px;top:1232px"></div>
<div class="g" style="left:296px;top:1282px"></div>
<div class="g" style="left:400px;top:1282px"></div>
<div class="g" style="left:504px;top:1282px"></div>
<div class="g" style="left:296px;top:1332px"></div>
<div class="g" style="left:400px;top:1332px"></div>
<div class="g" style="left:296px;top:1382px"></div>
<div class="g" style="left:400px;top:1382px"></div>
<div class="g" style="left:296px;top:1432px"></div>
<div class="g" style="left:400px;top:1432px"></div>
<div class="g" style="left:504px;top:1432px"></div>
<div class="g" style="left:296px;top:1482px"></div>
<div class="g" style="left:400px;top:1482px"></div>
<div class="g" style="left:296px;top:1532px"></div>
<div class="g" style="left:400px;top:1532px"></div>
<div class="g" style="left:296px;top:1582px"></div>
<div class="g" style="left:400px;top:1582px"></div>
<div class="g" style="left:504px;top:1582px"></div>
<div class="g" style="left:296px;top:1632px"></div>
<div class="g" style="left:400px;top:1632px"></div>
<div class="g" style="left:296px;top:1682px"></div>
<div class="g" style="left:400px;top:1682px"></div>
<div class="g" style="left:296px;top:1732px"></div>
<div class="g" style="left:400px;top:1732px"></div>
<div class="g" style="left:504px;top:1732px"></div>
<div class="g" style="left:296px;top:1782px"></div>
<div class="g" style="left:400px;top:1782px"></div>
<div class="ln" style="top:232px">1</div>
<div class="code" style="top:232px;transform:scaleY(0.87);transform-origin:0 36px;-webkit-text-stroke-color:#e8e8ff"><span class="d"><span class="br">&lt;</span>?</span><span class="tg">xml</span> <span class="a">version</span><span class="e">=</span><span class="v">&quot;1.<span class="z">O</span>&quot;</span> <span class="a">encoding</span><span class="e">=</span><span class="v">&quot;utf-8&quot;</span><span class="d">?<span class="br">&gt;</span></span></div>
<div class="ln" style="top:282px">2</div>
<div class="code" style="top:282px;transform:scaleY(0.87);transform-origin:0 36px"><span class="tg"><span class="br">&lt;</span>project</span> <span class="a">name</span><span class="e">=</span><span class="v">&quot;My Project&quot;</span> <span class="a">ver</span><span class="e">=</span><span class="v">&quot;1.4&quot;</span><span class="tg"><span class="br">&gt;</span></span></div>
<div class="ln" style="top:332px">3</div>
<div class="code" style="top:332px;transform:scaleY(0.87);transform-origin:0 36px">  <span class="tg"><span class="br">&lt;</span>scenes</span><span class="tg"><span class="br">&gt;</span></span></div>
<div class="ln" style="top:382px">4</div>
<div class="code" style="top:382px;transform:scaleY(0.87);transform-origin:0 36px">    <span class="tg"><span class="br">&lt;</span>scene</span> <span class="a">name</span><span class="e">=</span><span class="v">&quot;Scene 1&quot;</span> <span class="a">id</span><span class="e">=</span><span class="v">&quot;2c5fa4f5-a13c-4ca3-8b19-8bd36d1e62e1&quot;</span><span class="tg"><span class="br">&gt;</span></span></div>
<div class="ln" style="top:432px">5</div>
<div class="code" style="top:432px;transform:scaleY(0.87);transform-origin:0 36px">      <span class="tg"><span class="br">&lt;</span>vcontext</span> <span class="a">active</span><span class="e">=</span><span class="v">&quot;1&quot;</span><span class="tg"><span class="br">&gt;</span></span></div>
<div class="ln" style="top:482px">6</div>
<div class="code" style="top:482px;transform:scaleY(0.87);transform-origin:0 36px">        <span class="tg"><span class="br">&lt;</span>canvas</span> <span class="a">fps</span><span class="e">=</span><span class="v">&quot;3<span class="z">O</span>.<span class="z">O</span><span class="z">O</span>&quot;</span><span class="tg"><span class="br">&gt;</span></span></div>
<div class="ln" style="top:532px">7</div>
<div class="code" style="top:532px;transform:scaleY(0.87);transform-origin:0 36px">          <span class="tg"><span class="br">&lt;</span>size</span><span class="tg"><span class="br">&gt;</span></span></div>
<div class="ln" style="top:582px">8</div>
<div class="code" style="top:582px;transform:scaleY(0.87);transform-origin:0 36px">            <span class="tg"><span class="br">&lt;</span>width</span><span class="tg"><span class="br">&gt;</span></span><span class="x">128<span class="z">O</span></span><span class="tg"><span class="br">&lt;</span>/width</span><span class="tg"><span class="br">&gt;</span></span></div>
<div class="ln" style="top:632px">9</div>
<div class="code" style="top:632px;transform:scaleY(0.87);transform-origin:0 36px">            <span class="tg"><span class="br">&lt;</span>height</span><span class="tg"><span class="br">&gt;</span></span><span class="x">72<span class="z">O</span></span><span class="tg"><span class="br">&lt;</span>/height</span><span class="tg"><span class="br">&gt;</span></span></div>
<div class="ln" style="top:682px">1<span class=z>O</span></div>
<div class="code" style="top:682px;transform:scaleY(0.87);transform-origin:0 36px">          <span class="tg"><span class="br">&lt;</span>/size</span><span class="tg"><span class="br">&gt;</span></span></div>
<div class="ln" style="top:732px">11</div>
<div class="code" style="top:732px;transform:scaleY(0.87);transform-origin:0 36px">          <span class="tg"><span class="br">&lt;</span>effects</span><span class="tg"><span class="br">&gt;</span></span></div>
<div class="ln" style="top:782px">12</div>
<div class="code" style="top:782px;transform:scaleY(0.87);transform-origin:0 36px">            <span class="tg"><span class="br">&lt;</span>effect</span> <span class="a">name</span><span class="e">=</span><span class="v">&quot;HistogramR&quot;</span> <span class="a">enabled</span><span class="e">=</span><span class="v">&quot;<span class="z">O</span>&quot;</span><span class="tg"><span class="br">&gt;</span></span></div>
<div class="ln" style="top:832px">13</div>
<div class="code" style="top:832px;transform:scaleY(0.87);transform-origin:0 36px">              <span class="tg"><span class="br">&lt;</span>prop</span> <span class="a">name</span><span class="e">=</span><span class="v">&quot;vertices&quot;</span> <span class="a">type</span><span class="e">=</span><span class="v">&quot;6&quot;</span><span class="tg"><span class="br">&gt;</span></span><span class="tg"><span class="br">&lt;</span>/prop</span><span class="tg"><span class="br">&gt;</span></span></div>
<div class="ln" style="top:882px">14</div>
<div class="code" style="top:882px;transform:scaleY(0.87);transform-origin:0 36px">              <span class="tg"><span class="br">&lt;</span>prop</span> <span class="a">name</span><span class="e">=</span><span class="v">&quot;isWork&quot;</span> <span class="a">type</span><span class="e">=</span><span class="v">&quot;1&quot;</span> <span class="a">val</span><span class="e">=</span><span class="v">&quot;1&quot;</span><span class="tg"><span class="br">&gt;</span></span><span class="tg"><span class="br">&lt;</span>/prop</span><span class="tg"><span class="br">&gt;</span></span></div>
<div class="ln" style="top:932px">15</div>
<div class="code" style="top:932px;transform:scaleY(0.87);transform-origin:0 36px">            <span class="tg"><span class="br">&lt;</span>/effect</span><span class="tg"><span class="br">&gt;</span></span></div>
<div class="ln" style="top:982px">16</div>
<div class="code" style="top:982px;transform:scaleY(0.87);transform-origin:0 36px">            <span class="tg"><span class="br">&lt;</span>effect</span> <span class="a">name</span><span class="e">=</span><span class="v">&quot;HistogramG&quot;</span> <span class="a">enabled</span><span class="e">=</span><span class="v">&quot;<span class="z">O</span>&quot;</span><span class="tg"><span class="br">&gt;</span></span></div>
<div class="ln" style="top:1032px">17</div>
<div class="code" style="top:1032px;transform:scaleY(0.87);transform-origin:0 36px">              <span class="tg"><span class="br">&lt;</span>prop</span> <span class="a">name</span><span class="e">=</span><span class="v">&quot;vertices&quot;</span> <span class="a">type</span><span class="e">=</span><span class="v">&quot;6&quot;</span><span class="tg"><span class="br">&gt;</span></span><span class="tg"><span class="br">&lt;</span>/prop</span><span class="tg"><span class="br">&gt;</span></span></div>
<div class="ln" style="top:1082px">18</div>
<div class="code" style="top:1082px;transform:scaleY(0.87);transform-origin:0 36px">              <span class="tg"><span class="br">&lt;</span>prop</span> <span class="a">name</span><span class="e">=</span><span class="v">&quot;isWork&quot;</span> <span class="a">type</span><span class="e">=</span><span class="v">&quot;1&quot;</span> <span class="a">val</span><span class="e">=</span><span class="v">&quot;1&quot;</span><span class="tg"><span class="br">&gt;</span></span><span class="tg"><span class="br">&lt;</span>/prop</span><span class="tg"><span class="br">&gt;</span></span></div>
<div class="ln" style="top:1132px">19</div>
<div class="code" style="top:1132px;transform:scaleY(0.87);transform-origin:0 36px">            <span class="tg"><span class="br">&lt;</span>/effect</span><span class="tg"><span class="br">&gt;</span></span></div>
<div class="ln" style="top:1182px">2<span class=z>O</span></div>
<div class="code" style="top:1182px;transform:scaleY(0.87);transform-origin:0 36px">            <span class="tg"><span class="br">&lt;</span>effect</span> <span class="a">name</span><span class="e">=</span><span class="v">&quot;HistogramB&quot;</span> <span class="a">enabled</span><span class="e">=</span><span class="v">&quot;<span class="z">O</span>&quot;</span><span class="tg"><span class="br">&gt;</span></span></div>
<div class="ln" style="top:1232px">21</div>
<div class="code" style="top:1232px;transform:scaleY(0.87);transform-origin:0 36px">              <span class="tg"><span class="br">&lt;</span>prop</span> <span class="a">name</span><span class="e">=</span><span class="v">&quot;vertices&quot;</span> <span class="a">type</span><span class="e">=</span><span class="v">&quot;6&quot;</span><span class="tg"><span class="br">&gt;</span></span><span class="tg"><span class="br">&lt;</span>/prop</span><span class="tg"><span class="br">&gt;</span></span></div>
<div class="ln" style="top:1282px">22</div>
<div class="code" style="top:1282px;transform:scaleY(0.87);transform-origin:0 36px">              <span class="tg"><span class="br">&lt;</span>prop</span> <span class="a">name</span><span class="e">=</span><span class="v">&quot;isWork&quot;</span> <span class="a">type</span><span class="e">=</span><span class="v">&quot;1&quot;</span> <span class="a">val</span><span class="e">=</span><span class="v">&quot;1&quot;</span><span class="tg"><span class="br">&gt;</span></span><span class="tg"><span class="br">&lt;</span>/prop</span><span class="tg"><span class="br">&gt;</span></span></div>
<div class="ln" style="top:1332px">23</div>
<div class="code" style="top:1332px;transform:scaleY(0.87);transform-origin:0 36px">            <span class="tg"><span class="br">&lt;</span>/effect</span><span class="tg"><span class="br">&gt;</span></span></div>
<div class="ln" style="top:1382px">24</div>
<div class="code" style="top:1382px;transform:scaleY(0.87);transform-origin:0 36px">            <span class="tg"><span class="br">&lt;</span>effect</span> <span class="a">name</span><span class="e">=</span><span class="v">&quot;HistogramTransfer&quot;</span> <span class="a">enabled</span><span class="e">=</span><span class="v">&quot;<span class="z">O</span>&quot;</span><span class="tg"><span class="br">&gt;</span></span></div>
<div class="ln" style="top:1432px">25</div>
<div class="code" style="top:1432px;transform:scaleY(0.87);transform-origin:0 36px">              <span class="tg"><span class="br">&lt;</span>prop</span> <span class="a">name</span><span class="e">=</span><span class="v">&quot;Histogram&quot;</span> <span class="a">type</span><span class="e">=</span><span class="v">&quot;1&quot;</span> <span class="a">val</span><span class="e">=</span><span class="v">&quot;-16764316&quot;</span><span class="tg"><span class="br">&gt;</span></span><span class="tg"><span class="br">&lt;</span>/prop</span><span class="tg"><span class="br">&gt;</span></span></div>
<div class="ln" style="top:1482px">26</div>
<div class="code" style="top:1482px;transform:scaleY(0.87);transform-origin:0 36px">            <span class="tg"><span class="br">&lt;</span>/effect</span><span class="tg"><span class="br">&gt;</span></span></div>
<div class="ln" style="top:1532px">27</div>
<div class="code" style="top:1532px;transform:scaleY(0.87);transform-origin:0 36px">            <span class="tg"><span class="br">&lt;</span>effect</span> <span class="a">name</span><span class="e">=</span><span class="v">&quot;Contrast&quot;</span> <span class="a">enabled</span><span class="e">=</span><span class="v">&quot;<span class="z">O</span>&quot;</span><span class="tg"><span class="br">&gt;</span></span></div>
<div class="ln" style="top:1582px">28</div>
<div class="code" style="top:1582px;transform:scaleY(0.87);transform-origin:0 36px">              <span class="tg"><span class="br">&lt;</span>prop</span> <span class="a">name</span><span class="e">=</span><span class="v">&quot;Amount&quot;</span> <span class="a">type</span><span class="e">=</span><span class="v">&quot;1&quot;</span> <span class="a">val</span><span class="e">=</span><span class="v">&quot;5<span class="z">O</span>&quot;</span><span class="tg"><span class="br">&gt;</span></span><span class="tg"><span class="br">&lt;</span>/prop</span><span class="tg"><span class="br">&gt;</span></span></div>
<div class="ln" style="top:1632px">29</div>
<div class="code" style="top:1632px;transform:scaleY(0.87);transform-origin:0 36px">            <span class="tg"><span class="br">&lt;</span>/effect</span><span class="tg"><span class="br">&gt;</span></span></div>
<div class="ln" style="top:1682px">3<span class=z>O</span></div>
<div class="code" style="top:1682px;transform:scaleY(0.87);transform-origin:0 36px">            <span class="tg"><span class="br">&lt;</span>effect</span> <span class="a">name</span><span class="e">=</span><span class="v">&quot;Brightness&quot;</span> <span class="a">enabled</span><span class="e">=</span><span class="v">&quot;<span class="z">O</span>&quot;</span><span class="tg"><span class="br">&gt;</span></span></div>
<div class="ln" style="top:1732px">31</div>
<div class="code" style="top:1732px;transform:scaleY(0.87);transform-origin:0 36px">              <span class="tg"><span class="br">&lt;</span>prop</span> <span class="a">name</span><span class="e">=</span><span class="v">&quot;Amount&quot;</span> <span class="a">type</span><span class="e">=</span><span class="v">&quot;1&quot;</span> <span class="a">val</span><span class="e">=</span><span class="v">&quot;1<span class="z">O</span><span class="z">O</span>&quot;</span><span class="tg"><span class="br">&gt;</span></span><span class="tg"><span class="br">&lt;</span>/prop</span><span class="tg"><span class="br">&gt;</span></span></div>
<div class="ln" style="top:1782px">32</div>
<div class="code" style="top:1782px;transform:scaleY(0.87);transform-origin:0 36px">            <span class="tg"><span class="br">&lt;</span>/effect</span><span class="tg"><span class="br">&gt;</span></span></div>
<div class="r" style="left:0;top:1823px;width:2477px;height:1px;background:#fff"></div>
<div class="r" style="left:0;top:1824px;width:2477px;height:2px;background:#555"></div>
<div class="r" style="left:0;top:1826px;width:2477px;height:59px;background:#f0f0f0"></div>
<div class="r" style="left:3px;top:1826px;width:1px;height:59px;background:#fff"></div>
<div class="ssep" style="left:603px"></div>
<div class="ssep" style="left:1153px"></div>
<div class="ssep" style="left:1803px"></div>
<div class="ssep" style="left:2078px"></div>
<div class="ssep" style="left:2378px"></div>
<div class="t" style="left:4.81px;top:1833.86px;font-size:29.86px;line-height:44.78px;transform:scaleX(0.9963);color:#000;font-family:'Liberation Sans',sans-serif;-webkit-text-stroke:0.5px #f0f0f0">eXtensible Markup Language file</div>
<div class="t" style="left:606.62px;top:1833.86px;font-size:29.86px;line-height:44.78px;transform:scaleX(0.993);color:#000;font-family:'Liberation Sans',sans-serif;-webkit-text-stroke:0.5px #f0f0f0">length : 19,096</div>
<div class="t" style="left:834.18px;top:1833.86px;font-size:29.86px;line-height:44.78px;transform:scaleX(0.9665);color:#000;font-family:'Liberation Sans',sans-serif;-webkit-text-stroke:0.5px #f0f0f0">lines : 405</div>
<div class="t" style="left:1156.53px;top:1833.86px;font-size:29.86px;line-height:44.78px;transform:scaleX(0.9497);color:#000;font-family:'Liberation Sans',sans-serif;-webkit-text-stroke:0.5px #f0f0f0">Ln : 1</div>
<div class="t" style="left:1258.87px;top:1833.86px;font-size:29.86px;line-height:44.78px;transform:scaleX(0.9568);color:#000;font-family:'Liberation Sans',sans-serif;-webkit-text-stroke:0.5px #f0f0f0">Col : 1</div>
<div class="t" style="left:1373.99px;top:1833.86px;font-size:29.86px;line-height:44.78px;transform:scaleX(0.9253);color:#000;font-family:'Liberation Sans',sans-serif;-webkit-text-stroke:0.5px #f0f0f0">Pos : 1</div>
<div class="t" style="left:1808.42px;top:1833.86px;font-size:29.86px;line-height:44.78px;transform:scaleX(0.9436);color:#000;font-family:'Liberation Sans',sans-serif;-webkit-text-stroke:0.5px #f0f0f0">Windows (CR LF)</div>
<div class="t" style="left:2082.63px;top:1833.86px;font-size:29.86px;line-height:44.78px;transform:scaleX(0.9505);color:#000;font-family:'Liberation Sans',sans-serif;-webkit-text-stroke:0.5px #f0f0f0">UTF-8</div>
<div class="r" style="left:2330px;top:1857px;width:144px;height:25px;background:#6e6e6e"></div>
<div class="t" style="left:2373.4px;top:1852.4px;font-family:'Liberation Sans';font-size:26px;line-height:39px;color:#b8b8b8;transform:scaleX(0.8);-webkit-text-stroke:0.6px #6e6e6e">LO4D.com</div>
<svg class="r" style="left:2334px;top:1859px" width="38" height="26" viewBox="0 0 38 26"><circle cx="19" cy="13" r="8.5" fill="none" stroke="#9a9a9a" stroke-width="2"/><path d="M5.5 12L11.5 3L17 12z M32 14L26 23L20.5 14z" fill="#b0b0b0"/><path d="M8 11C8 18 12 23 19 23" stroke="#b0b0b0" stroke-width="3.5" fill="none"/><path d="M30 15C30 8 26 3 19 3" stroke="#b0b0b0" stroke-width="3.5" fill="none"/></svg>
<div class="r" style="left:2464px;top:1858px;width:5px;height:5px;background:#5a5a5a"></div>
<div class="r" style="left:2457px;top:1865px;width:5px;height:5px;background:#5a5a5a"></div>
<div class="r" style="left:2464px;top:1865px;width:5px;height:5px;background:#5a5a5a"></div>
<div class="t" style="left:2381.91px;top:1833.86px;font-size:29.86px;line-height:44.78px;transform:scaleX(1.0371);color:#000;font-family:'Liberation Sans',sans-serif;-webkit-text-stroke:0.5px #f0f0f0">IN</div>
</div>
<div class="r" style="left:2330px;top:1882px;width:147px;height:3px;background:#242424"></div>
<div class="r" style="left:2473px;top:1857px;width:4px;height:28px;background:#242424"></div>
</body></html>
